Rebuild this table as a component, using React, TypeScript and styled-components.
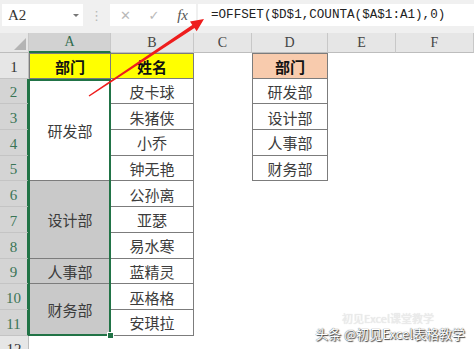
import * as React from "react";
import styled, { createGlobalStyle } from "styled-components";

const GlobalStyle = createGlobalStyle`
  html, body {
    margin: 0;
    padding: 0;
    background: #ffffff;
    overflow: hidden;
  }
`;

const serif = `"Liberation Serif", "Noto Sans CJK SC", serif`;
const green = "#217346";

const Page = styled.div`
  position: relative;
  width: 474px;
  height: 349px;
  overflow: hidden;
  font-family: ${serif};
`;

/* formula bar */

const Toolbar = styled.div`
  display: flex;
  align-items: flex-start;
  height: 33px;
  padding-top: 4px;
  padding-left: 2px;
  box-sizing: border-box;
  background: #f0f0f0;
`;

const NameBox = styled.div`
  display: flex;
  align-items: center;
  justify-content: space-between;
  width: 81px;
  height: 22px;
  padding: 0 4px 0 6px;
  box-sizing: border-box;
  background: #ffffff;
  font-size: 15px;
  color: #333;
`;

const Caret = styled.span`
  width: 0;
  height: 0;
  border-left: 3px solid transparent;
  border-right: 3px solid transparent;
  border-top: 3px solid #777;
`;

const Grip = styled.div`
  width: 27px;
  height: 22px;
  display: flex;
  align-items: center;
  justify-content: center;
  color: #b8b8b8;
  font-size: 13px;
  font-family: "DejaVu Sans", sans-serif;
`;

const FxBox = styled.div`
  display: flex;
  align-items: center;
  justify-content: space-between;
  width: 86px;
  height: 22px;
  padding: 0 8px 0 10px;
  box-sizing: border-box;
  background: #ffffff;
  margin-right: 2px;
`;

const FxGlyph = styled.span<{ $italic?: boolean }>`
  font-family: ${({ $italic }) => ($italic ? serif : `"DejaVu Sans", sans-serif`)};
  font-style: ${({ $italic }) => ($italic ? "italic" : "normal")};
  font-size: ${({ $italic }) => ($italic ? "15px" : "13px")};
  color: ${({ $italic }) => ($italic ? "#555" : "#b9b9b9")};
`;

const Formula = styled.div`
  flex: 1;
  height: 22px;
  display: flex;
  align-items: center;
  padding-left: 13px;
  background: #ffffff;
  font-family: "Liberation Mono", monospace;
  font-size: 12.6px;
  color: #222;
  white-space: nowrap;
`;

/* sheet */

const Sheet = styled.div`
  display: grid;
  grid-template-columns: 29px 82px 83px 58px 76px 68px 78px;
  grid-template-rows: 20px repeat(12, 25.7px);
  background: #ffffff;
`;

interface IPlaceProps {
  $row: number;
  $col: number;
  $span?: number;
}

const place = ({ $row, $col, $span = 1 }: IPlaceProps) => `
  grid-row: ${$row} / span ${$span};
  grid-column: ${$col};
`;

const Corner = styled.div`
  grid-row: 1;
  grid-column: 1;
  position: relative;
  background: #e6e6e6;
  border-right: 1px solid #c8c8c8;
  border-bottom: 1px solid #bdbdbd;

  &::after {
    content: "";
    position: absolute;
    right: 2px;
    bottom: 2px;
    width: 0;
    height: 0;
    border-left: 12px solid transparent;
    border-bottom: 12px solid #b4b4b4;
  }
`;

const ColHead = styled.div<IPlaceProps & { $sel?: boolean }>`
  ${place}
  display: flex;
  align-items: center;
  justify-content: center;
  box-sizing: border-box;
  font-size: 14px;
  background: ${({ $sel }) => ($sel ? "#d2d2d2" : "#e6e6e6")};
  color: ${({ $sel }) => ($sel ? "#2f6b4c" : "#444")};
  border-right: 1px solid #c8c8c8;
  border-bottom: ${({ $sel }) => ($sel ? `2px solid ${green}` : "1px solid #bdbdbd")};
`;

const RowHead = styled.div<IPlaceProps & { $sel?: boolean }>`
  ${place}
  display: flex;
  align-items: flex-end;
  justify-content: center;
  padding-bottom: 2px;
  box-sizing: border-box;
  font-size: 15px;
  background: ${({ $sel }) => ($sel ? "#d4d4d4" : "#e6e6e6")};
  color: ${({ $sel }) => ($sel ? "#3a7556" : "#333")};
  border-bottom: 1px solid #c4c4c4;
  border-right: ${({ $sel }) => ($sel ? `2px solid ${green}` : "1px solid #bdbdbd")};
`;

interface ICellProps extends IPlaceProps {
  $fill?: string;
  $bold?: boolean;
  $top?: boolean;
  $left?: boolean;
}

const Cell = styled.div<ICellProps>`
  ${place}
  display: flex;
  align-items: center;
  justify-content: center;
  box-sizing: border-box;
  font-size: 15px;
  font-weight: ${({ $bold }) => ($bold ? 700 : 400)};
  color: ${({ $bold }) => ($bold ? "#111" : "#3c3c3c")};
  background: ${({ $fill }) => $fill || "#ffffff"};
  border-right: 1px solid #7c7c7c;
  border-bottom: 1px solid #7c7c7c;
  border-top: ${({ $top }) => ($top ? "1px solid #7c7c7c" : "none")};
  border-left: ${({ $left }) => ($left ? "1px solid #7c7c7c" : "none")};
  padding-top: 1px;
`;

const Selection = styled.div`
  grid-row: 3 / span 10;
  grid-column: 2;
  position: relative;
  margin-left: -1px;
  border: 2px solid ${green};
  pointer-events: none;

  &::after {
    content: "";
    position: absolute;
    right: -5px;
    bottom: -5px;
    width: 5px;
    height: 5px;
    background: ${green};
    border: 1px solid #ffffff;
  }
`;

/* overlays */

const ArrowLayer = styled.svg`
  position: absolute;
  left: 0;
  top: 0;
  pointer-events: none;
`;

const Watermark = styled.div`
  position: absolute;
  right: 9px;
  bottom: 7px;
  font-family: "Noto Sans CJK SC", "Noto Sans", sans-serif;
  font-size: 13px;
  line-height: 17px;
  color: #ffffff;
  text-shadow: 0 0 1px #222, 1px 1px 1px #444;
  white-space: nowrap;
`;

const Ghost = styled.div`
  position: absolute;
  right: 40px;
  bottom: 24px;
  font-family: "Noto Sans CJK SC", "Noto Sans", sans-serif;
  font-size: 11px;
  line-height: 14px;
  color: #ececec;
  text-shadow: 0 0 1px #d6d6d6;
  white-space: nowrap;
`;

const letters = ["A", "B", "C", "D", "E", "F"];
const names = ["皮卡球", "朱猪侠", "小乔", "钟无艳", "公孙离", "亚瑟", "易水寒", "蓝精灵", "巫格格", "安琪拉"];
const depts = ["研发部", "设计部", "人事部", "财务部"];
const merged = [
  { text: "研发部", row: 3, span: 4, fill: "#ffffff" },
  { text: "设计部", row: 7, span: 3, fill: "#c9c9c9" },
  { text: "人事部", row: 10, span: 1, fill: "#c9c9c9" },
  { text: "财务部", row: 11, span: 2, fill: "#c9c9c9" },
];

export default function App() {
  return (
    <Page>
      <GlobalStyle />
      <Toolbar>
        <NameBox>
          <span>A2</span>
          <Caret />
        </NameBox>
        <Grip>⋮</Grip>
        <FxBox>
          <FxGlyph>✕</FxGlyph>
          <FxGlyph>✓</FxGlyph>
          <FxGlyph $italic>fx</FxGlyph>
        </FxBox>
        <Formula>=OFFSET($D$1,COUNTA($A$1:A1),0)</Formula>
      </Toolbar>

      <Sheet>
        <Corner />
        {letters.map((l, i) => (
          <ColHead key={l} $row={1} $col={i + 2} $sel={l === "A"}>
            {l}
          </ColHead>
        ))}
        {Array.from({ length: 12 }, (_, i) => (
          <RowHead key={i} $row={i + 2} $col={1} $sel={i >= 1 && i <= 10}>
            {i + 1}
          </RowHead>
        ))}

        <Cell $row={2} $col={2} $fill="#ffff00" $bold $top $left>
          部门
        </Cell>
        <Cell $row={2} $col={3} $fill="#ffff00" $bold $top>
          姓名
        </Cell>
        {merged.map((m) => (
          <Cell key={m.text} $row={m.row} $col={2} $span={m.span} $fill={m.fill} $left>
            {m.text}
          </Cell>
        ))}
        {names.map((n, i) => (
          <Cell key={n} $row={i + 3} $col={3}>
            {n}
          </Cell>
        ))}

        <Cell $row={2} $col={5} $fill="#f8cbad" $bold $top $left>
          部门
        </Cell>
        {depts.map((d, i) => (
          <Cell key={d} $row={i + 3} $col={5} $left>
            {d}
          </Cell>
        ))}

        <Selection />
      </Sheet>

      <ArrowLayer width={474} height={349} viewBox="0 0 474 349">
        <polygon
          points="88.6,95.4 192.3,24.9 190,21.6 204,19 196.7,31.3 194.5,28.1 89.4,96.6"
          fill="#ee1d1d"
        />
      </ArrowLayer>

      <Ghost>初见Excel课堂教学</Ghost>
      <Watermark>头条 @初见Excel表格教学</Watermark>
    </Page>
  );
}
